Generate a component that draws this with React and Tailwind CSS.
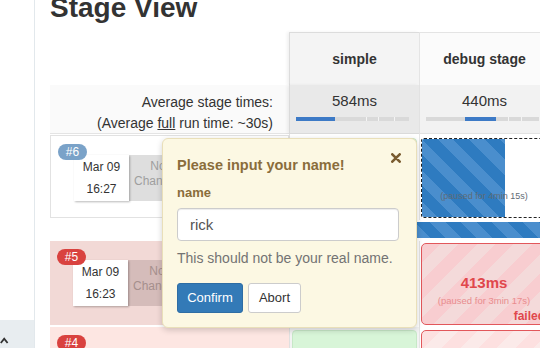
import React from "react";

const BLUE_STRIPES =
  "[background-image:repeating-linear-gradient(45deg,#4a8ecd_0px,#4a8ecd_11px,#2e7bc0_11px,#2e7bc0_22px)]";
const PINK_STRIPES =
  "[background-image:repeating-linear-gradient(135deg,#f8cdd0_0px,#f8cdd0_13px,#f4dada_13px,#f4dada_26px)]";
const LIGHT_PINK_STRIPES =
  "[background-image:repeating-linear-gradient(135deg,#fde0e0_0px,#fde0e0_13px,#fbeae9_13px,#fbeae9_26px)]";

function Badge({ n, className }) {
  return (
    <span
      className={
        "absolute left-[7px] top-[8px] z-10 flex h-[16px] w-[29px] items-center justify-center rounded-full text-[12px] leading-none text-white " +
        className
      }
    >
      #{n}
    </span>
  );
}

function BuildInfo({ n, badge, time, changes }) {
  return (
    <>
      <Badge n={n} className={badge} />
      <div className="flex pl-[23px] pt-[19px]">
        <div className="relative z-[1] flex h-[46px] w-[55px] flex-col items-center justify-center bg-white text-[12px] leading-[22px] text-[#333] shadow-[1px_1px_2px_rgba(0,0,0,0.28)]">
          <span>Mar 09</span>
          <span>{time}</span>
        </div>
        <div
          className={
            "flex h-[46px] w-[58px] flex-col items-center pt-[4px] text-[12px] leading-[15px] " +
            changes
          }
        >
          <span>No</span>
          <span>Changes</span>
        </div>
      </div>
    </>
  );
}

const GRAY = "bg-[#d9d9d9]";
const DIV = "bg-[#f4f4f4]";
const BLUE = "bg-[#3d7ac6]";

function Bar({ segments }) {
  return (
    <div className="ml-[6px] mt-[6px] flex h-[4px] w-[113px]">
      {segments.map(([w, c], i) => (
        <div key={i} className={c} style={{ width: w }} />
      ))}
    </div>
  );
}

function Popover() {
  return (
    <div className="absolute left-[127px] top-[138px] z-20 h-[190px] w-[255px] rounded-[6px] border border-[#e9dfb9] bg-[#fcf8e3] pl-[14px] pr-[15px] pt-[16px] shadow-[0_2px_6px_rgba(0,0,0,0.18)]">
      <div className="flex items-start justify-between">
        <span className="text-[14.5px] font-bold leading-[20px] text-[#8a6d3b]">
          Please input your name!
        </span>
        <svg
          className="mt-[-2px]"
          width="10"
          height="10"
          viewBox="0 0 10 10"
        >
          <path
            d="M1.3 1.3 L8.7 8.7 M8.7 1.3 L1.3 8.7"
            stroke="#7a5c30"
            strokeWidth="2.6"
            strokeLinecap="round"
          />
        </svg>
      </div>
      <div className="mt-[9px] text-[13px] font-bold leading-[18px] text-[#8a6d3b]">
        name
      </div>
      <input
        readOnly
        value="rick"
        className="mt-[6px] block h-[33px] w-[222px] rounded-[4px] border border-[#cccccc] bg-white px-[12px] text-[15px] text-[#555] shadow-[inset_0_1px_1px_rgba(0,0,0,0.075)] outline-none"
      />
      <div className="mt-[7px] text-[14px] leading-[20px] text-[#737373]">
        This should not be your real name.
      </div>
      <div className="mt-[15px] flex gap-[5px]">
        <button className="h-[30px] w-[66px] rounded-[3px] border border-[#2e6da4] bg-[#337ab7] text-[13px] text-white">
          Confirm
        </button>
        <button className="h-[30px] w-[53px] rounded-[3px] border border-[#cccccc] bg-white text-[13px] text-[#333]">
          Abort
        </button>
      </div>
    </div>
  );
}

export default function App() {
  return (
    <div className="relative flex h-[348px] w-[540px] overflow-hidden bg-white font-['Liberation_Sans',Arial,sans-serif] text-[#333]">
      <aside className="flex w-[35px] shrink-0 flex-col justify-end border-r border-[#e2e8ec] bg-white">
        <div className="flex h-[28px] items-end bg-[#e8edf0] pb-[4px]">
          <svg width="9" height="7" viewBox="0 0 9 7">
            <polyline
              points="0.8,6 4.2,1.6 7.6,6"
              fill="none"
              stroke="#333"
              strokeWidth="1.8"
            />
          </svg>
        </div>
      </aside>

      <main className="relative min-w-0 flex-1 pl-[15px]">
        <h1 className="mt-[-9px] h-[34px] whitespace-nowrap text-[28px] font-bold leading-[34px] text-[#333]">
          Stage View
        </h1>

        <div className="mt-[7px] grid w-[499px] grid-cols-[239px_130px_130px]">
          {/* header row */}
          <div className="h-[53px] bg-white" />
          <div className="flex h-[53px] items-center justify-center border-l border-t border-[#dcdcdc] bg-[#f4f4f4] text-[14px] font-bold shadow-[-2px_0_3px_rgba(0,0,0,0.06)]">
            simple
          </div>
          <div className="flex h-[53px] items-center justify-center border-l border-t border-[#e4e4e4] bg-[#fbfbfb] text-[14px] font-bold">
            debug stage
          </div>

          {/* averages row */}
          <div className="h-[49px] border-b border-[#e4e4e4] bg-[#fafafa] pr-[16px] pt-[7px] text-right text-[14px] leading-[21px]">
            <div>Average stage times:</div>
            <div>
              (Average <span className="underline">full</span> run time: ~30s)
            </div>
          </div>
          <div className="h-[49px] border-b border-l border-[#dadada] bg-[#e9e9e9] pt-[6px] shadow-[-2px_0_3px_rgba(0,0,0,0.06)]">
            <div className="text-center text-[15px] leading-[20px]">584ms</div>
            <Bar
              segments={[
                [39, BLUE],
                [31, GRAY],
                [1, DIV],
                [11, GRAY],
                [1, DIV],
                [15, GRAY],
                [1, DIV],
                [14, GRAY],
              ]}
            />
          </div>
          <div className="h-[49px] border-b border-l border-[#e2e2e2] bg-[#f2f2f2] pt-[6px]">
            <div className="text-center text-[15px] leading-[20px]">440ms</div>
            <Bar
              segments={[
                [39, GRAY],
                [31, BLUE],
                [12, GRAY],
                [1, DIV],
                [12, GRAY],
                [1, DIV],
                [17, GRAY],
              ]}
            />
          </div>

          {/* build #6 */}
          <div className="h-[86px] bg-white pt-[1px]">
            <div className="relative h-[83px] border border-[#e2e2e2] bg-white">
              <BuildInfo
                n={6}
                badge="bg-[#7aa2c8]"
                time="16:27"
                changes="bg-[#dedede] text-[#9e9e9e]"
              />
            </div>
          </div>
          <div className="h-[86px] border-l border-[#e0e0e0] bg-white px-[2px] pt-[4px]">
            <div className="h-[80px] rounded-[4px] border border-[#c7e8c7] bg-[#d8f5d8]" />
          </div>
          <div className="h-[86px] border-l border-[#e4e4e4] bg-white pl-[1px] pt-[4px]">
            <div className="relative flex h-[80px] w-[126px] overflow-hidden rounded-[3px] border border-dashed border-[#222] bg-white">
              <div className={"h-full w-[83px] " + BLUE_STRIPES} />
              <span className="absolute bottom-[15px] left-0 right-0 text-center text-[9px] leading-[11px] text-[#5f6b75]">
                (paused for 4min 15s)
              </span>
            </div>
          </div>

          {/* running band */}
          <div className="h-[21px] bg-white" />
          <div className="col-span-2 h-[21px] border-l border-[#e0e0e0] bg-white pt-[2px]">
            <div className={"h-[16px] w-full " + BLUE_STRIPES} />
          </div>

          {/* build #5 */}
          <div className="relative h-[86px] border-b-2 border-white bg-[#f2d9d6]">
            <BuildInfo
              n={5}
              badge="bg-[#d9423f]"
              time="16:23"
              changes="bg-[#d5bcba] text-[#a58f8d]"
            />
          </div>
          <div className="h-[86px] border-l border-[#e0e0e0] bg-white px-[2px] pt-[2px]">
            <div className="h-[82px] rounded-[4px] border border-[#c7e8c7] bg-[#d8f5d8]" />
          </div>
          <div className="h-[86px] border-l border-[#e4e4e4] bg-white pl-[1px] pt-[2px]">
            <div
              className={
                "flex h-[82px] w-[126px] flex-col items-center rounded-[5px] border-[1.5px] border-[#e2575b] pt-[30px] " +
                PINK_STRIPES
              }
            >
              <span className="text-[15px] font-bold leading-[18px] text-[#e0474c]">
                413ms
              </span>
              <span className="mt-[2px] text-[9.5px] leading-[14px] text-[#e88c8e]">
                (paused for 3min 17s)
              </span>
              <span className="self-end pr-[1px] text-[12px] font-bold leading-[16px] text-[#e0474c]">
                failed
              </span>
            </div>
          </div>

          {/* build #4 */}
          <div className="relative h-[40px] bg-[#fde6e2]">
            <Badge n={4} className="bg-[#d9423f] top-[7px]" />
          </div>
          <div className="h-[40px] border-l border-[#e0e0e0] bg-[#f3f3f3] px-[2px] pt-[3px]">
            <div className="h-[60px] rounded-[4px] border border-[#c7e8c7] bg-[#d8f5d8]" />
          </div>
          <div className="h-[40px] border-l border-[#e4e4e4] bg-white pl-[1px] pt-[3px]">
            <div
              className={
                "h-[60px] w-[126px] rounded-[5px] border-[1.5px] border-[#e2575b] " +
                LIGHT_PINK_STRIPES
              }
            />
          </div>
        </div>

        <Popover />
      </main>
    </div>
  );
}
